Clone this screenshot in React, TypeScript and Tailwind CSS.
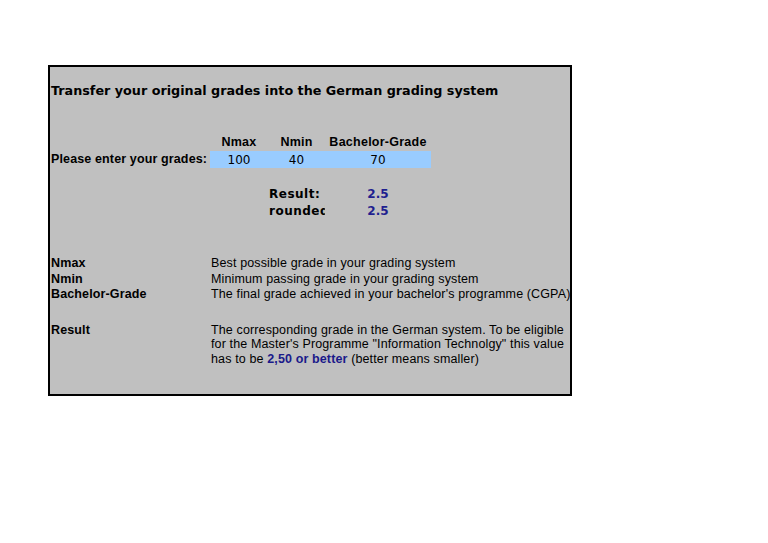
import React from "react";

const dv = { fontFamily: '"DejaVu Sans", sans-serif' };
const lib = { fontFamily: '"Liberation Sans", Arial, sans-serif' };

export default function App() {
  return (
    <div className="w-[768px] h-[543px] bg-white pt-[65px] pl-[48px]">
      <div className="w-[524px] h-[331px] border-2 border-black bg-[#c0c0c0] text-black">
        {/* title */}
        <div className="h-[15px]" />
        <div className="h-[17px] pl-[1px] flex items-center text-[12.75px] font-bold whitespace-nowrap" style={dv}>
          Transfer your original grades into the German grading system
        </div>
        <div className="h-[35px]" />
        {/* grade table */}
        <div className="grid grid-cols-[160px_58px_57px_106px] grid-rows-[17px_17px] text-[12.5px]">
          <div />
          <div className="flex items-center justify-center font-bold tracking-[0.25px]" style={lib}>Nmax</div>
          <div className="flex items-center justify-center font-bold tracking-[0.25px]" style={lib}>Nmin</div>
          <div className="flex items-center justify-center font-bold tracking-[0.25px]" style={lib}>Bachelor-Grade</div>
          <div className="flex items-center pl-[1px] font-bold whitespace-nowrap tracking-[0.13px]" style={lib}>Please enter your grades:</div>
          <div className="flex items-center justify-center bg-[#99ccff] text-[12px]" style={dv}>100</div>
          <div className="flex items-center justify-center bg-[#99ccff] text-[12px]" style={dv}>40</div>
          <div className="flex items-center justify-center bg-[#99ccff] text-[12px]" style={dv}>70</div>
        </div>
        <div className="h-[17px]" />
        <div className="grid grid-cols-[160px_58px_57px_106px] grid-rows-[17px_17px] text-[12px]">
          <div />
          <div />
          <div className="flex items-center pl-[1px] font-bold overflow-hidden whitespace-nowrap tracking-[0.5px]" style={dv}>Result:</div>
          <div className="flex items-center justify-center font-semibold text-[#1f1f8f]" style={dv}>2.5</div>
          <div />
          <div />
          <div className="flex items-center pl-[1px] font-bold overflow-hidden whitespace-nowrap tracking-[0.5px]" style={dv}>rounded</div>
          <div className="flex items-center justify-center font-semibold text-[#1f1f8f]" style={dv}>2.5</div>
        </div>
        <div className="h-[37px]" />
        {/* descriptions */}
        <div className="grid grid-cols-[160px_1fr] text-[12.5px] tracking-[0.13px] leading-[15.5px]" style={lib}>
          <div className="pl-[1px] font-bold">Nmax</div>
          <div className="pl-[1px] whitespace-nowrap">Best possible grade in your grading system</div>
          <div className="pl-[1px] font-bold">Nmin</div>
          <div className="pl-[1px] whitespace-nowrap">Minimum passing grade in your grading system</div>
          <div className="pl-[1px] font-bold">Bachelor-Grade</div>
          <div className="pl-[1px] whitespace-nowrap">The final grade achieved in your bachelor's programme (CGPA)</div>
          <div className="h-[20px]" />
          <div className="h-[20px]" />
          <div className="pl-[1px] font-bold">Result</div>
          <div className="pl-[1px] leading-[14.75px]">
            <div className="whitespace-nowrap">The corresponding grade in the German system. To be eligible</div>
            <div className="whitespace-nowrap">for the Master's Programme "Information Technolgy" this value</div>
            <div className="whitespace-nowrap">
              has to be <span className="font-bold text-[#1a1a8a]">2,50 or better</span> (better means smaller)
            </div>
          </div>
        </div>
      </div>
    </div>
  );
}
